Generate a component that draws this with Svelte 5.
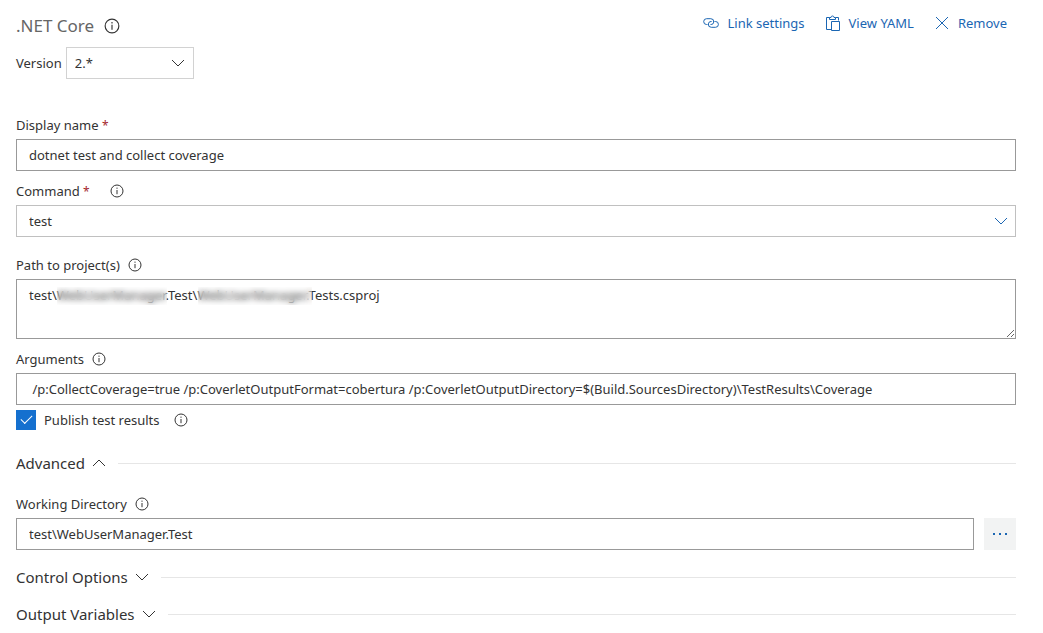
<script>
	let version = $state('2.*');
	let displayName = $state('dotnet test and collect coverage');
	let command = $state('test');
	let projects = $state('test\\WebUserManager.Test\\WebUserManager.Tests.csproj');
	let args = $state(' /p:CollectCoverage=true /p:CoverletOutputFormat=cobertura /p:CoverletOutputDirectory=$(Build.SourcesDirectory)\\TestResults\\Coverage');
	let publish = $state(true);
	let workingDirectory = $state('test\\WebUserManager.Test');
	let advancedOpen = $state(true);
	let controlOpen = $state(false);
	let outputOpen = $state(false);
</script>

{#snippet info(subject)}
	<button type="button" class="info" aria-label="About {subject}">
		<svg viewBox="0 0 14 14" aria-hidden="true">
			<circle cx="7" cy="7" r="6" />
			<path d="M7 6v4.2M7 3.6v1.2" />
		</svg>
	</button>
{/snippet}

{#snippet chevron(up)}
	<svg class="chevron" class:up viewBox="0 0 14 14" aria-hidden="true">
		<path d="M1 4l6 6 6-6" />
	</svg>
{/snippet}

<main class="task">
	<header class="task-header">
		<div class="title">
			<h1>.NET Core</h1>
			{@render info('.NET Core')}
		</div>
		<div class="actions">
			<button type="button" class="action">
				<svg viewBox="0 0 16 16" aria-hidden="true">
					<path d="M4.5 9.5h-.9a2.9 2.9 0 0 1 0-5.8h4.2a3 3 0 0 1 2.9 3.4 2.6 2.6 0 0 1-2.6 2.4h-.6" />
					<path d="M11.5 6.500h1a2.9 2.9 0 0 1 0 5.800h-4.200a3 3 0 0 1-2.900-3.400 2.600 2.600 0 0 1 2.600-2.400h.6" />
				</svg>
				Link settings
			</button>
			<button type="button" class="action">
				<svg viewBox="0 0 16 16" aria-hidden="true">
					<path d="M6.5 14.5h-5v-12h3M10.5 2.5h3v3M4.5 4.5v-2H6a1.5 1.5 0 0 1 3 0h1.5v2zM6.5 6.5h8v9h-8z" />
				</svg>
				View YAML
			</button>
			<button type="button" class="action">
				<svg viewBox="0 0 16 16" aria-hidden="true">
					<path d="M2 2l12 12M14 2L2 14" />
				</svg>
				Remove
			</button>
		</div>
	</header>

	<div class="version">
		<label for="version">Version</label>
		<div class="select small">
			<select id="version" bind:value={version}>
				<option>2.*</option>
				<option>1.*</option>
			</select>
			{@render chevron(false)}
		</div>
	</div>

	<div class="field">
		<div class="label">
			<label for="display-name">Display name <span class="required">*</span></label>
		</div>
		<input id="display-name" type="text" bind:value={displayName} />
	</div>

	<div class="field">
		<div class="label spaced">
			<label for="command">Command <span class="required">*</span></label>
			{@render info('Command')}
		</div>
		<div class="select">
			<select id="command" bind:value={command}>
				<option>build</option>
				<option>test</option>
				<option>publish</option>
			</select>
			{@render chevron(false)}
		</div>
	</div>

	<div class="field projects">
		<div class="label">
			<label for="projects">Path to project(s)</label>
			{@render info('Path to project(s)')}
		</div>
		<div class="redacted">
			<textarea id="projects" bind:value={projects} spellcheck="false"></textarea>
			<span class="mask folder"></span>
			<span class="mask file"></span>
		</div>
	</div>

	<div class="field">
		<div class="label">
			<label for="arguments">Arguments</label>
			{@render info('Arguments')}
		</div>
		<input id="arguments" type="text" bind:value={args} />
	</div>

	<div class="check">
		<input id="publish" type="checkbox" bind:checked={publish} />
		<label for="publish">Publish test results</label>
		{@render info('Publish test results')}
	</div>

	<section class="advanced">
		<h2>
			<button type="button" aria-expanded={advancedOpen} onclick={() => (advancedOpen = !advancedOpen)}>
				Advanced
				{@render chevron(advancedOpen)}
			</button>
		</h2>
		{#if advancedOpen}
			<div class="field directory">
				<div class="label">
					<label for="working-directory">Working Directory</label>
					{@render info('Working Directory')}
				</div>
				<div class="browse">
					<input id="working-directory" type="text" bind:value={workingDirectory} />
					<button type="button" aria-label="Browse working directory">
						<svg viewBox="0 0 16 4" aria-hidden="true">
							<path d="M1 1h2v2H1zM7 1h2v2H7zM13 1h2v2h-2z" />
						</svg>
					</button>
				</div>
			</div>
		{/if}
	</section>

	<section class="control">
		<h2>
			<button type="button" aria-expanded={controlOpen} onclick={() => (controlOpen = !controlOpen)}>
				Control Options
				{@render chevron(controlOpen)}
			</button>
		</h2>
	</section>

	<section class="output">
		<h2>
			<button type="button" aria-expanded={outputOpen} onclick={() => (outputOpen = !outputOpen)}>
				Output Variables
				{@render chevron(outputOpen)}
			</button>
		</h2>
	</section>
</main>

<style>
	:global(body) {
		margin: 0;
		background: #fff;
	}

	.task {
		padding: 16px 27px 7px 16px;
		font-family: 'Segoe UI', 'Noto Sans', 'Open Sans', sans-serif;
		font-size: 13px;
		line-height: 20px;
		color: #333;
	}

	button,
	input,
	select,
	textarea {
		margin: 0;
		font: inherit;
		color: inherit;
		box-sizing: border-box;
	}

	button {
		padding: 0;
		border: 0;
		background: none;
		cursor: pointer;
	}

	svg {
		display: block;
		flex: none;
		fill: none;
		stroke: currentColor;
		stroke-width: 1;
	}

	.task-header {
		display: flex;
		justify-content: space-between;
		align-items: flex-start;
		height: 20px;
	}

	.title {
		display: flex;
		align-items: center;
		gap: 10px;
	}

	.title h1 {
		margin: 0;
		font-size: 17px;
		font-weight: 400;
		line-height: 20px;
		color: #666;
	}

	.info svg {
		width: 14px;
		height: 14px;
	}

	.title .info svg {
		width: 16px;
		height: 16px;
	}

	.actions {
		display: flex;
		gap: 20px;
		margin-top: -3px;
		padding-right: 9px;
	}

	.action {
		display: flex;
		align-items: center;
		gap: 8px;
		color: #1b66b3;
	}

	.action svg {
		width: 16px;
		height: 16px;
	}

	.version {
		display: flex;
		align-items: center;
		gap: 4px;
		margin: 11px 0 36px;
	}

	.select {
		position: relative;
	}

	.select select {
		display: block;
		width: 100%;
		height: 32px;
		padding: 0 32px 0 12px;
		border: 1px solid #c0c0c0;
		border-radius: 0;
		background: #fff;
		appearance: none;
	}

	.select.small {
		width: 128px;
	}

	.select.small select {
		padding-left: 8px;
		border-color: #d2d2d2;
	}

	.select .chevron {
		position: absolute;
		top: 9px;
		right: 8px;
		pointer-events: none;
		color: #1b66b3;
	}

	.select.small .chevron {
		right: 9px;
		color: #333;
	}

	.chevron {
		width: 14px;
		height: 14px;
	}

	.chevron.up {
		transform: rotate(180deg);
	}

	.field {
		margin-bottom: 10px;
	}

	.label {
		display: flex;
		align-items: center;
		gap: 8px;
		margin-bottom: 4px;
	}

	.label.spaced {
		gap: 20px;
	}

	.required {
		font-size: 12px;
		line-height: 12px;
		color: #a4262c;
	}

	.field input,
	.field textarea {
		display: block;
		width: 100%;
		height: 32px;
		padding: 0 12px;
		border: 1px solid #999;
		border-radius: 0;
		background: #fff;
	}

	.field textarea {
		height: 60px;
		padding: 5px 12px;
		resize: vertical;
	}

	.projects {
		margin-top: 18px;
	}

	.redacted {
		position: relative;
	}

	.mask {
		position: absolute;
		top: 8px;
		height: 18px;
		backdrop-filter: blur(3px);
		pointer-events: none;
	}

	.mask.folder {
		left: 41px;
		width: 110px;
	}

	.mask.file {
		left: 182px;
		width: 114px;
	}

	.check {
		display: flex;
		align-items: center;
		gap: 8px;
		margin-top: -5px;
	}

	.check input {
		display: grid;
		place-items: center;
		width: 20px;
		height: 20px;
		border: 1px solid #999;
		appearance: none;
	}

	.check input:checked {
		border-color: #1570cf;
		background: #1570cf;
	}

	.check input:checked::before {
		content: '';
		width: 10px;
		height: 5px;
		margin-bottom: 4px;
		border-left: 1px solid #fff;
		border-bottom: 1px solid #fff;
		transform: rotate(-45deg);
	}

	.check label {
		margin-right: 6px;
	}

	h2 {
		display: flex;
		align-items: center;
		gap: 12px;
		margin: 0;
		font-size: 15px;
		font-weight: 400;
		line-height: 24px;
	}

	h2::after {
		content: '';
		flex: 1;
		height: 1px;
		background: #e6e6e6;
	}

	h2 button {
		display: flex;
		align-items: center;
		gap: 7px;
	}

	.advanced {
		margin-top: 21px;
	}

	.directory {
		margin: 19px 0 0;
	}

	.browse {
		display: flex;
		gap: 10px;
	}

	.browse input {
		flex: 1;
		min-width: 0;
	}

	.browse button {
		display: grid;
		place-items: center;
		width: 32px;
		height: 32px;
		background: #f2f3f3;
		color: #1b66b3;
	}

	.browse svg {
		width: 16px;
		height: 4px;
		fill: currentColor;
		stroke: none;
	}

	.control {
		margin-top: 15px;
	}

	.output {
		margin-top: 13px;
	}
</style>
